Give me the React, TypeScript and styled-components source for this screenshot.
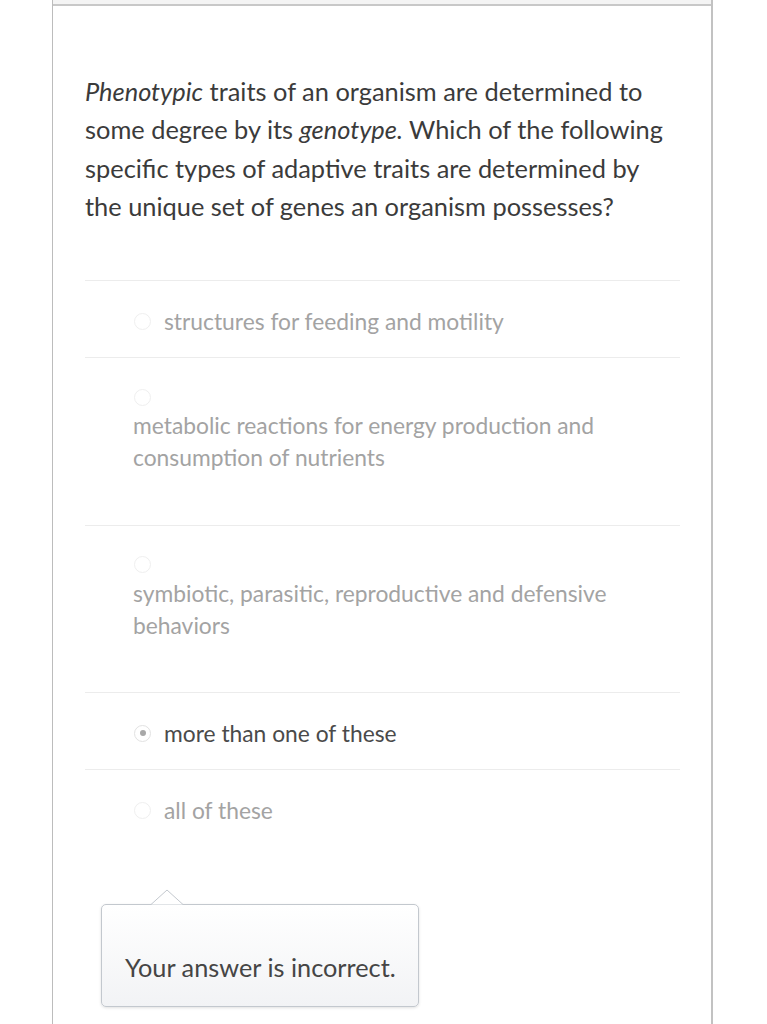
import React from "react";
import styled, { createGlobalStyle } from "styled-components";

const Global = createGlobalStyle`
  html, body { margin: 0; padding: 0; background: #ffffff; }
  body { font-family: Lato, "Open Sans", sans-serif; }
`;

const Panel = styled.div`
  margin-left: 52px;
  width: 658px;
  min-height: 1024px;
  border-left: 1px solid #bcbcbc;
  border-right: 2px solid #c2c2c2;
  box-sizing: content-box;
  background: #fff;
`;

const TopStrip = styled.div`
  height: 4px;
  background: #f4f4f4;
  border-bottom: 2px solid #c8c8c8;
`;

const Body = styled.div`
  padding: 66px 31px 0 32px;
`;

const Question = styled.p`
  margin: 0 0 55px;
  font-size: 25.4px;
  line-height: 38.33px;
  color: #3b3b3b;
  em { font-style: italic; }
`;

const AnswerList = styled.div`
  display: flex;
  flex-direction: column;
`;

const Row = styled.div<{ $stacked?: boolean }>`
  border-top: 1px solid #ececec;
  padding: ${(p) => (p.$stacked ? "27px 0 51.5px 48px" : "24px 0 20px 48px")};
  display: flex;
  flex-direction: ${(p) => (p.$stacked ? "column" : "row")};
  align-items: ${(p) => (p.$stacked ? "flex-start" : "center")};
`;

const RadioLine = styled.div<{ $stacked?: boolean }>`
  height: ${(p) => (p.$stacked ? "24px" : "32px")};
  display: flex;
  align-items: center;
  margin-right: ${(p) => (p.$stacked ? "0" : "13px")};
`;

const Radio = styled.span<{ $checked?: boolean }>`
  width: 17px;
  height: 17px;
  box-sizing: border-box;
  border-radius: 50%;
  border: 1px solid ${(p) => (p.$checked ? "#e2e2e2" : "#efefef")};
  margin-left: 1px;
  display: flex;
  align-items: center;
  justify-content: center;
  &::after {
    content: "";
    width: 6px;
    height: 6px;
    border-radius: 50%;
    background: #a8a8a8;
    display: ${(p) => (p.$checked ? "block" : "none")};
  }
`;

const AnswerText = styled.span<{ $selected?: boolean }>`
  font-size: 22.8px;
  line-height: 32px;
  color: ${(p) => (p.$selected ? "#4a4a4a" : "#a3a3a3")};
`;

const FeedbackWrap = styled.div`
  position: relative;
  margin: 58px 0 0 16px;
  width: 318px;
`;

const Arrow = styled.svg`
  position: absolute;
  top: -15px;
  left: 50px;
`;

const Feedback = styled.div`
  box-sizing: border-box;
  height: 103px;
  border: 1px solid #c3c8ce;
  border-radius: 5px;
  background: linear-gradient(#ffffff, #f2f3f5);
  box-shadow: 0 1px 3px rgba(0, 0, 0, 0.12);
  display: flex;
  align-items: center;
  padding: 22px 0 0 23px;
  font-size: 25.3px;
  color: #454545;
`;

const answers = [
  { text: "structures for feeding and motility" },
  { text: "metabolic reactions for energy production and consumption of nutrients", stacked: true },
  { text: "symbiotic, parasitic, reproductive and defensive behaviors", stacked: true },
  { text: "more than one of these", checked: true },
  { text: "all of these" },
];

export default function App() {
  return (
    <>
      <Global />
      <Panel>
        <TopStrip />
        <Body>
          <Question>
            <em>Phenotypic</em> traits of an organism are determined to some degree by its{" "}
            <em>genotype.</em> Which of the following specific types of adaptive traits are
            determined by the unique set of genes an organism possesses?
          </Question>
          <AnswerList>
            {answers.map((a, i) => (
              <Row key={i} $stacked={a.stacked}>
                <RadioLine $stacked={a.stacked}>
                  <Radio $checked={a.checked} />
                </RadioLine>
                <AnswerText $selected={a.checked}>{a.text}</AnswerText>
              </Row>
            ))}
          </AnswerList>
          <FeedbackWrap>
            <Arrow width="32" height="16" viewBox="0 0 32 16">
              <path d="M0 15.5 L16 1 L32 15.5" fill="#ffffff" stroke="#c3c8ce" strokeWidth="1" />
            </Arrow>
            <Feedback>Your answer is incorrect.</Feedback>
          </FeedbackWrap>
        </Body>
      </Panel>
    </>
  );
}
